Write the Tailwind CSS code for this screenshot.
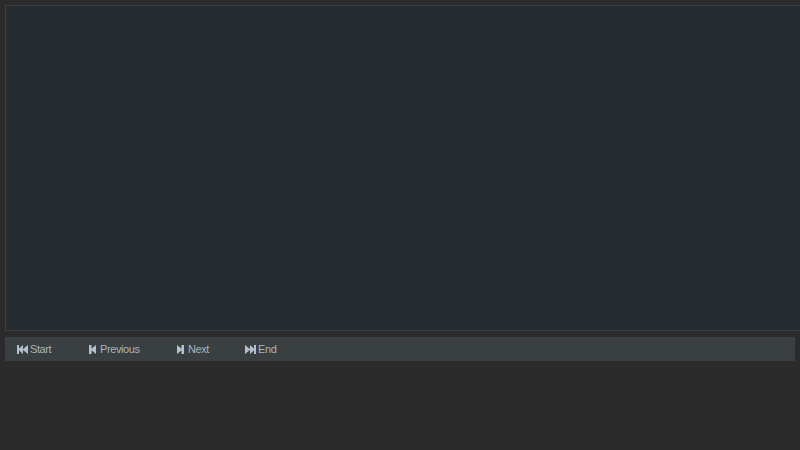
<!DOCTYPE html>
<html lang="en">
<head>
    <meta charset="UTF-8">
    <title>Player</title>
    <script src="https://cdn.jsdelivr.net/npm/@tailwindcss/browser@4"></script>
</head>
<body class="bg-[#2b2b2b] w-[800px] h-[450px] overflow-hidden font-['Liberation_Sans',sans-serif]">
    <div class="pt-[5px] pl-[5px]">
        <!-- viewer -->
        <div class="h-[326px] bg-[#272c30] border border-r-0 border-[#3c3f41]"></div>
    </div>
    <!-- toolbar -->
    <div class="mt-[6px] mx-[5px] pl-[12px] h-[24px] bg-[#3a3f42] flex items-center text-[11px] tracking-[-0.4px] text-[#a9b4bd]">
        <button class="w-[72px] flex items-center gap-[2px]">
            <svg class="w-[11px] h-[9px]" viewBox="0 0 11 9" fill="#b4c0cb"><path d="M0 0h2v9H0zM1 4.5L6 0v9zM5.5 4.5L11 0v9z"/></svg>
            <span>Start</span>
        </button>
        <button class="w-[88px] flex items-center gap-[4px]">
            <svg class="w-[7px] h-[9px]" viewBox="0 0 7 9" fill="#b4c0cb"><path d="M0 0h2.5v9H0zM1.5 4.5L7 0v9z"/></svg>
            <span>Previous</span>
        </button>
        <button class="w-[68px] flex items-center gap-[4px]">
            <svg class="w-[7px] h-[9px]" viewBox="0 0 7 9" fill="#b4c0cb"><path d="M4.5 0H7v9H4.5zM0 0l5.5 4.5L0 9z"/></svg>
            <span>Next</span>
        </button>
        <button class="flex items-center gap-[2px]">
            <svg class="w-[11px] h-[9px]" viewBox="0 0 11 9" fill="#b4c0cb"><path d="M9 0h2v9H9zM0 0l5.5 4.5L0 9zM5 0l5 4.5L5 9z"/></svg>
            <span>End</span>
        </button>
    </div>
</body>
</html>
